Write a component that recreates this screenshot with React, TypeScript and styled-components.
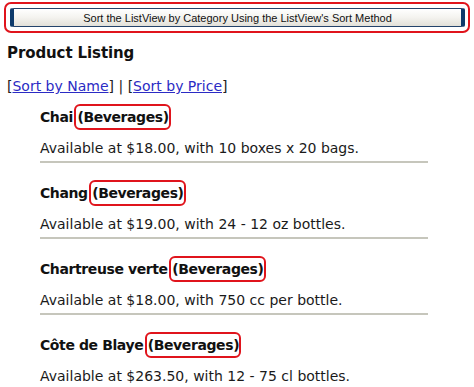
import React from "react";
import styled, { createGlobalStyle } from "styled-components";

interface Product {
	name: string;
	category: string;
	price: string;
	quantity: string;
}

const products: Product[] = [
	{ name: "Chai", category: "Beverages", price: "$18.00", quantity: "10 boxes x 20 bags" },
	{ name: "Chang", category: "Beverages", price: "$19.00", quantity: "24 - 12 oz bottles" },
	{ name: "Chartreuse verte", category: "Beverages", price: "$18.00", quantity: "750 cc per bottle" },
	{ name: "Côte de Blaye", category: "Beverages", price: "$263.50", quantity: "12 - 75 cl bottles" },
];

const App: React.FC = () => {
	return (
		<Page>
			<GlobalStyle />
			<Callout>
				<SortButton>Sort the ListView by Category Using the ListView's Sort Method</SortButton>
			</Callout>
			<Title>Product Listing</Title>
			<SortLinks>
				[<a href="#">Sort by Name</a>] | [<a href="#">Sort by Price</a>]
			</SortLinks>
			<List>
				{products.map((p, i) => (
					<Item key={p.name}>
						<Name>
							{p.name} <Marked>({p.category})</Marked>
						</Name>
						<Desc>
							Available at {p.price}, with {p.quantity}.
						</Desc>
						{i < products.length - 1 && <Rule />}
					</Item>
				))}
			</List>
		</Page>
	);
};

export default App;

const GlobalStyle = createGlobalStyle`
	html, body {
		margin: 0;
		padding: 0;
		background: #ffffff;
	}
	body {
		font-family: "DejaVu Sans", Verdana, sans-serif;
		color: #111;
	}
`;

const Page = styled.div`
	width: 474px;
	height: 387px;
	overflow: hidden;
	padding: 2px 0 0 0;
	box-sizing: border-box;
`;

const Callout = styled.div`
	margin: 0 4px 0 4px;
	width: 466px;
	height: 31px;
	box-sizing: border-box;
	border: 2px solid #e0141c;
	border-radius: 7px;
	padding: 4px 3px 0 4px;
`;

const SortButton = styled.button`
	display: block;
	width: 455px;
	height: 19px;
	padding: 0;
	margin: 0;
	box-sizing: border-box;
	border: 1px solid #24436b;
	border-left: 4px solid #0d3a6b;
	border-right: 4px solid #0d3a6b;
	border-radius: 2px;
	background: linear-gradient(to bottom, #ffffff 0%, #f4f3ef 50%, #e2e0d8 100%);
	font-family: "Liberation Sans", Arial, sans-serif;
	font-size: 11px;
	color: #111;
	text-align: center;
	cursor: pointer;
`;

const Title = styled.div`
	margin: 10px 0 0 7px;
	font-size: 15px;
	line-height: 20px;
	font-weight: bold;
	letter-spacing: -0.1px;
`;

const SortLinks = styled.div`
	margin: 14px 0 0 7px;
	font-size: 14px;
	line-height: 18px;
	color: #222;
	> a {
		color: #2b2bc4;
		text-decoration: underline;
	}
`;

const List = styled.div`
	margin: 13px 0 0 40px;
	width: 388px;
`;

const Item = styled.div`
	margin-bottom: 21px;
`;

const Name = styled.div`
	font-size: 14px;
	line-height: 18px;
	font-weight: bold;
	letter-spacing: -0.4px;
`;

const Marked = styled.span`
	display: inline-block;
	border: 2px solid #e0141c;
	border-radius: 6px;
	padding: 2px 0 2px 1px;
	margin: -4px 0 -4px -3px;
	line-height: 18px;
`;

const Desc = styled.div`
	margin-top: 13px;
	font-size: 14px;
	line-height: 18px;
	color: #1a1a1a;
`;

const Rule = styled.div`
	margin-top: 4px;
	height: 2px;
	background: #c6c6bc;
`;
